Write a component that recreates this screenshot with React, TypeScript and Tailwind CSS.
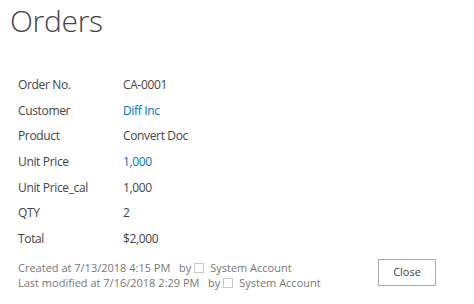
import React from "react";

const rows: { label: string; value: string; link?: boolean }[] = [
  { label: "Order No.", value: "CA-0001" },
  { label: "Customer", value: "Diff Inc", link: true },
  { label: "Product", value: "Convert Doc" },
  { label: "Unit Price", value: "1,000", link: true },
  { label: "Unit Price_cal", value: "1,000" },
  { label: "QTY", value: "2" },
  { label: "Total", value: "$2,000" },
];

const Box = () => (
  <span className="inline-block w-[10px] h-[10px] border border-[#c8c8c8] ml-[3px] mr-[6px] align-[-1px]" />
);

export default function App() {
  return (
    <div className="w-[474px] h-[304px] bg-white text-[#333] font-['Open_Sans',sans-serif]">
      <h1 className="pl-[10px] pt-[1px] text-[30px] font-light leading-[40px] tracking-[-0.3px] text-[#444]">
        Orders
      </h1>
      <div className="mt-[31px] pl-[18px] flex flex-col">
        {rows.map((r) => (
          <div key={r.label} className="flex h-[25.7px] items-center text-[12px] tracking-[-0.35px]">
            <div className="w-[105px] text-[#444]">{r.label}</div>
            <div className={r.link ? "text-[#0072c6]" : "text-[#444]"}>{r.value}</div>
          </div>
        ))}
      </div>
      <div className="mt-[8px] pl-[18px] pr-[38px] flex items-start justify-between">
        <div className="text-[11px] leading-[15px] text-[#777]">
          <div>
            Created at 7/13/2018 4:15 PM&nbsp;&nbsp; by<Box />System Account
          </div>
          <div>
            Last modified at 7/16/2018 2:29 PM&nbsp;&nbsp; by<Box />System Account
          </div>
        </div>
        <button className="mt-[-1px] w-[58px] h-[27px] border border-[#ababab] bg-white text-[11px] text-[#444]">
          Close
        </button>
      </div>
    </div>
  );
}
